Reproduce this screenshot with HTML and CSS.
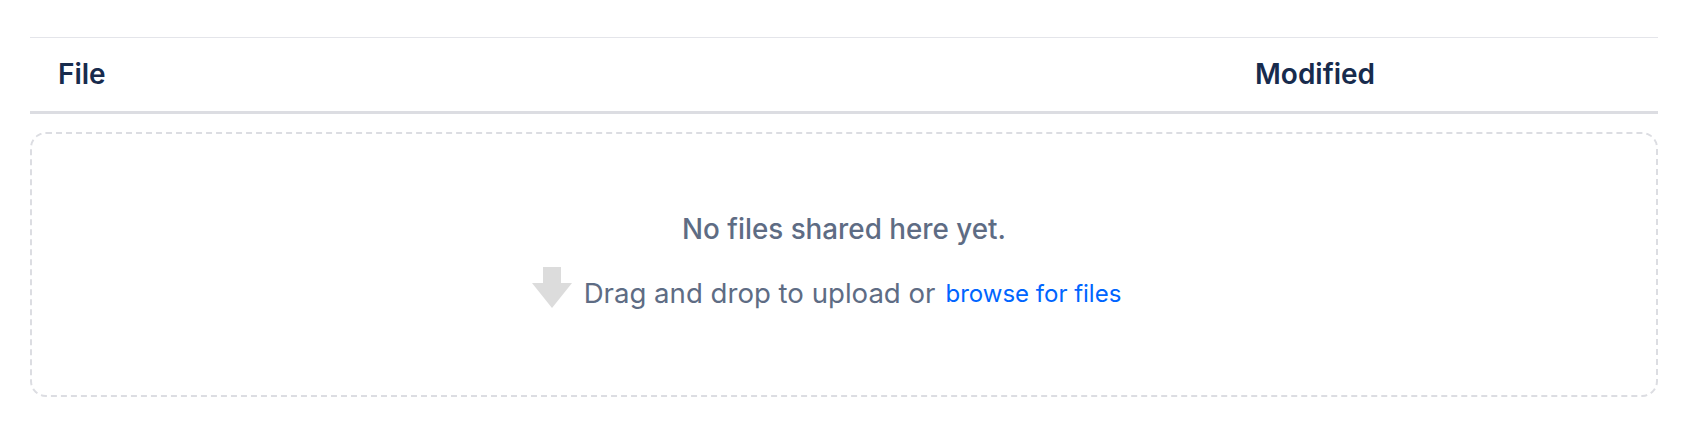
FILE: index.html
```html
<!DOCTYPE html>
<html lang="en">
<head>
  <meta charset="UTF-8">
  <meta name="viewport" content="width=device-width, initial-scale=1.0">
  <title>Files</title>
  <link rel="stylesheet" href="styles.css">
</head>
<body>
  <div class="files">
    <div class="files-head">
      <div class="col-file">File</div>
      <div class="col-modified">Modified</div>
    </div>
    <div class="dropzone">
      <p class="empty-title">No files shared here yet.</p>
      <p class="empty-hint">
        <svg class="arrow" width="40" height="41" viewBox="0 0 40 41" aria-hidden="true">
          <path d="M11 0h18v16h11L20 41 0 16h11z" fill="#dcdcdc"/>
        </svg>
        <span>Drag and drop to upload or</span>
        <a class="browse" href="#">browse for files</a>
      </p>
    </div>
  </div>
</body>
</html>
```

FILE: styles.css
```css
body {
  margin: 0;
  background: #ffffff;
  font-family: Inter, "Liberation Sans", sans-serif;
}

.files {
  padding: 37px 42px 0 30px;
}

.files-head {
  display: flex;
  align-items: center;
  height: 71px;
  padding-left: 28px;
  padding-bottom: 2px;
  border-top: 1px solid #e4e5ea;
  border-bottom: 3px solid #dcdde2;
  color: #172b4d;
  font-size: 28px;
  font-weight: 600;
}

.col-file {
  width: 1197px;
}

.dropzone {
  display: flex;
  flex-direction: column;
  align-items: center;
  box-sizing: border-box;
  height: 265px;
  margin-top: 18px;
  padding-top: 79px;
  border: 2px dashed #dcdde2;
  border-radius: 16px;
  color: #5e6c84;
}

.empty-title {
  margin: 0;
  font-size: 27.8px;
  font-weight: 500;
  line-height: 32px;
}

.empty-hint {
  display: flex;
  align-items: center;
  gap: 10px;
  margin: 26px 0 0;
  padding-right: 35px;
  font-size: 27.6px;
  line-height: 42px;
}

.arrow {
  margin-right: 2px;
  transform: translateY(-6px);
}

.browse {
  padding-top: 2px;
  color: #0065ff;
  font-size: 24px;
  text-decoration: none;
}
```
